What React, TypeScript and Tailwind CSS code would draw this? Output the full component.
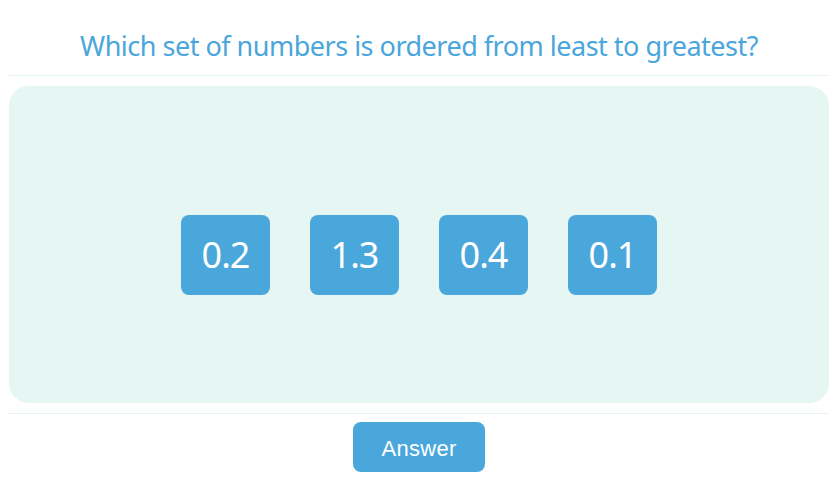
const numbers = ["0.2", "1.3", "0.4", "0.1"];

export default function App() {
  return (
    <div className="min-h-[501px] bg-white pl-[9px] pr-[11px] font-['Noto_Sans',sans-serif]">
      <header className="flex h-[76px] items-center justify-center border-b border-[#e6f4f1] pt-[15px]">
        <h1 className="text-[27px] leading-none tracking-[-0.5px] text-[#4aa6dc]">
          Which set of numbers is ordered from least to greatest?
        </h1>
      </header>

      <section className="mt-[10px] flex h-[317px] items-center justify-center gap-[40px] rounded-[20px] bg-[#e6f6f2] pt-[20px]">
        {numbers.map((n) => (
          <div
            key={n}
            className="flex h-[80px] w-[89px] items-center justify-center rounded-[8px] bg-[#4aa7dc] text-[36px] leading-none tracking-[-1px] text-white"
          >
            {n}
          </div>
        ))}
      </section>

      <div className="mt-[10px] flex justify-center border-t border-[#e6f4f1] pt-[8px]">
        <button className="h-[50px] w-[132px] rounded-[8px] bg-[#4aa7dc] pt-[3px] font-['Liberation_Sans',sans-serif] text-[22px] tracking-[0.3px] text-white">
          Answer
        </button>
      </div>
    </div>
  );
}
